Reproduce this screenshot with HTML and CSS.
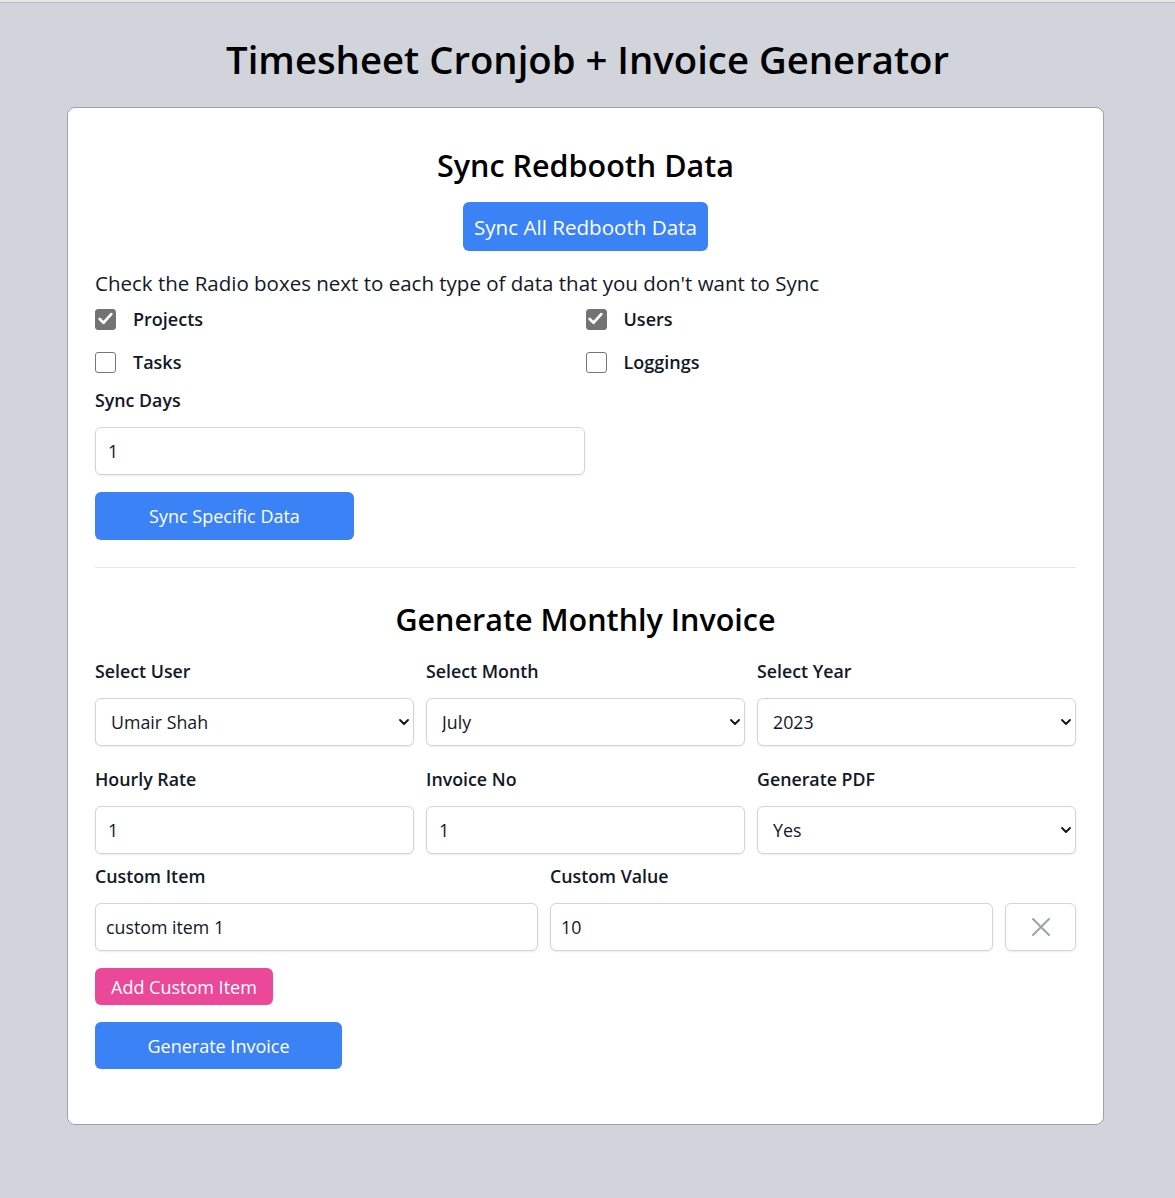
FILE: index.html
```html
<!DOCTYPE html>
<html lang="en">
<head>
<meta charset="utf-8">
<title>Timesheet Cronjob + Invoice Generator</title>
<link rel="stylesheet" href="styles.css">
</head>
<body>
<div class="topstrip"></div>
<h1 class="page-title">Timesheet Cronjob + Invoice Generator</h1>
<main class="card">
  <section class="sync">
    <h2 class="section-title">Sync Redbooth Data</h2>
    <div class="center">
      <button class="btn btn-blue btn-all">Sync All Redbooth Data</button>
    </div>
    <p class="hint">Check the Radio boxes next to each type of data that you don't want to Sync</p>
    <div class="checks">
      <label class="check"><span class="box checked"><svg viewBox="0 0 20 20" width="21" height="21"><path d="M4.5 10.5 L8.2 14 L15.5 5.8" fill="none" stroke="#fff" stroke-width="2.6" stroke-linecap="round" stroke-linejoin="round"/></svg></span><span class="check-text">Projects</span></label>
      <label class="check"><span class="box checked"><svg viewBox="0 0 20 20" width="21" height="21"><path d="M4.5 10.5 L8.2 14 L15.5 5.8" fill="none" stroke="#fff" stroke-width="2.6" stroke-linecap="round" stroke-linejoin="round"/></svg></span><span class="check-text">Users</span></label>
      <label class="check"><span class="box"></span><span class="check-text">Tasks</span></label>
      <label class="check"><span class="box"></span><span class="check-text">Loggings</span></label>
    </div>
    <div class="field-label sync-days-label">Sync Days</div>
    <div class="half">
      <input class="input" type="text" value="1">
    </div>
    <button class="btn btn-blue btn-specific">Sync Specific Data</button>
  </section>
  <hr class="divider">
  <section class="invoice">
    <h2 class="section-title invoice-title">Generate Monthly Invoice</h2>
    <div class="grid3">
      <div class="field">
        <div class="field-label">Select User</div>
        <div class="select-wrap">
          <select class="input select"><option>Umair Shah</option></select>
          <svg class="chev" viewBox="0 0 12 12" width="12" height="12"><path d="M2 4 L6 8 L10 4" fill="none" stroke="#111" stroke-width="1.8" stroke-linecap="round" stroke-linejoin="round"/></svg>
        </div>
      </div>
      <div class="field">
        <div class="field-label">Select Month</div>
        <div class="select-wrap">
          <select class="input select"><option>July</option></select>
          <svg class="chev" viewBox="0 0 12 12" width="12" height="12"><path d="M2 4 L6 8 L10 4" fill="none" stroke="#111" stroke-width="1.8" stroke-linecap="round" stroke-linejoin="round"/></svg>
        </div>
      </div>
      <div class="field">
        <div class="field-label">Select Year</div>
        <div class="select-wrap">
          <select class="input select"><option>2023</option></select>
          <svg class="chev" viewBox="0 0 12 12" width="12" height="12"><path d="M2 4 L6 8 L10 4" fill="none" stroke="#111" stroke-width="1.8" stroke-linecap="round" stroke-linejoin="round"/></svg>
        </div>
      </div>
      <div class="field">
        <div class="field-label">Hourly Rate</div>
        <input class="input" type="text" value="1">
      </div>
      <div class="field">
        <div class="field-label">Invoice No</div>
        <input class="input" type="text" value="1">
      </div>
      <div class="field">
        <div class="field-label">Generate PDF</div>
        <div class="select-wrap">
          <select class="input select"><option>Yes</option></select>
          <svg class="chev" viewBox="0 0 12 12" width="12" height="12"><path d="M2 4 L6 8 L10 4" fill="none" stroke="#111" stroke-width="1.8" stroke-linecap="round" stroke-linejoin="round"/></svg>
        </div>
      </div>
    </div>
    <div class="custom-labels">
      <div class="field-label">Custom Item</div>
      <div class="field-label">Custom Value</div>
      <div class="spacer"></div>
    </div>
    <div class="custom-row">
      <input class="input custom-input" type="text" value="custom item 1">
      <input class="input custom-input" type="text" value="10">
      <button class="btn-x" aria-label="Remove"><svg viewBox="0 0 20 20" width="20" height="20"><path d="M2 2 L18 18 M18 2 L2 18" fill="none" stroke="#9ca3af" stroke-width="2" stroke-linecap="round"/></svg></button>
    </div>
    <button class="btn btn-pink">Add Custom Item</button>
    <div>
      <button class="btn btn-blue btn-generate">Generate Invoice</button>
    </div>
  </section>
</main>
</body>
</html>
```
FILE: styles.css
```css
* { box-sizing: border-box; }
html, body { margin: 0; padding: 0; }
body {
  background: #d1d5db;
  font-family: "Open Sans", "Noto Sans", sans-serif;
  color: #111827;
  min-height: 1198px;
}
.topstrip {
  height: 3px;
  background: #e6e6e6;
  border-bottom: 1px solid #b9bcc2;
}
.page-title {
  margin: 0;
  padding-top: 32px;
  height: 104px;
  text-align: center;
  font-size: 38.3px;
  line-height: 48px;
  font-weight: 600;
  color: #000;
}
.card {
  width: 1037px;
  margin: 0 0 0 67px;
  background: #fff;
  border: 1px solid #9ca3af;
  border-radius: 8px;
  padding: 28px 27px 55px 27px;
}
.section-title {
  margin: 11px 0 0 0;
  text-align: center;
  font-size: 30.5px;
  line-height: 36px;
  font-weight: 600;
  color: #000;
}
.center { text-align: center; margin-top: 19px; }
.btn {
  border: none;
  border-radius: 6px;
  color: #fff;
  font-family: inherit;
  cursor: pointer;
  padding: 0;
}
.btn-blue { background: #3b82f6; }
.btn-all {
  width: 245px;
  height: 49px;
  font-size: 20.6px;
}
.hint {
  margin: 18px 0 0 0;
  font-size: 20.5px;
  line-height: 28px;
}
.checks {
  margin-top: 8px;
  display: grid;
  grid-template-columns: 1fr 1fr;
  row-gap: 15px;
}
.check {
  display: flex;
  align-items: center;
  height: 28px;
}
.box {
  width: 21px;
  height: 21px;
  border: 1.5px solid #767676;
  border-radius: 3px;
  background: #fff;
  display: inline-flex;
  margin-right: 17px;
}
.box.checked {
  background: #737373;
  border-color: #737373;
}
.box svg { margin: -1.5px; }
.check-text {
  font-size: 18px;
  font-weight: 600;
}
.field-label {
  font-size: 17.8px;
  line-height: 28px;
  font-weight: 600;
  color: #111827;
}
.sync-days-label { margin-top: 10px; }
.half {
  width: 490px;
  margin-top: 13px;
}
.input {
  display: block;
  width: 100%;
  height: 48px;
  border: 1px solid #d1d5db;
  border-radius: 6px;
  box-shadow: 0 1px 2px rgba(0,0,0,0.08);
  background: #fff;
  font-family: inherit;
  font-size: 17.8px;
  color: #111827;
  padding: 0 12px;
  outline: none;
}
.btn-specific {
  margin-top: 17px;
  width: 259px;
  height: 48px;
  font-size: 18px;
}
.divider {
  border: none;
  border-top: 1px solid #e5e7eb;
  margin: 27px 0 0 0;
}
.invoice-title { margin-top: 33px; }
.grid3 {
  margin-top: 20px;
  display: grid;
  grid-template-columns: repeat(3, 1fr);
  column-gap: 12px;
  row-gap: 19px;
}
.field .field-label { margin-bottom: 13px; }
.select-wrap { position: relative; }
.select {
  appearance: none;
  -webkit-appearance: none;
  padding-left: 15px;
}
.chev {
  position: absolute;
  right: 4px;
  top: 18px;
  pointer-events: none;
}
.custom-labels {
  margin-top: 8px;
  display: flex;
  gap: 12px;
}
.custom-labels .field-label { flex: 1; }
.spacer { width: 71px; }
.custom-row {
  margin-top: 13px;
  display: flex;
  gap: 12px;
}
.custom-input { flex: 1; width: auto; padding-left: 10px; }
.btn-x {
  width: 71px;
  height: 48px;
  border: 1px solid #d1d5db;
  border-radius: 6px;
  background: #fff;
  box-shadow: 0 1px 2px rgba(0,0,0,0.08);
  display: flex;
  align-items: center;
  justify-content: center;
  padding: 0;
}
.btn-pink {
  margin-top: 17px;
  background: #ec4899;
  height: 37px;
  padding: 0 16px;
  font-size: 18px;
}
.btn-generate {
  margin-top: 17px;
  width: 247px;
  height: 47px;
  font-size: 18px;
}
```
